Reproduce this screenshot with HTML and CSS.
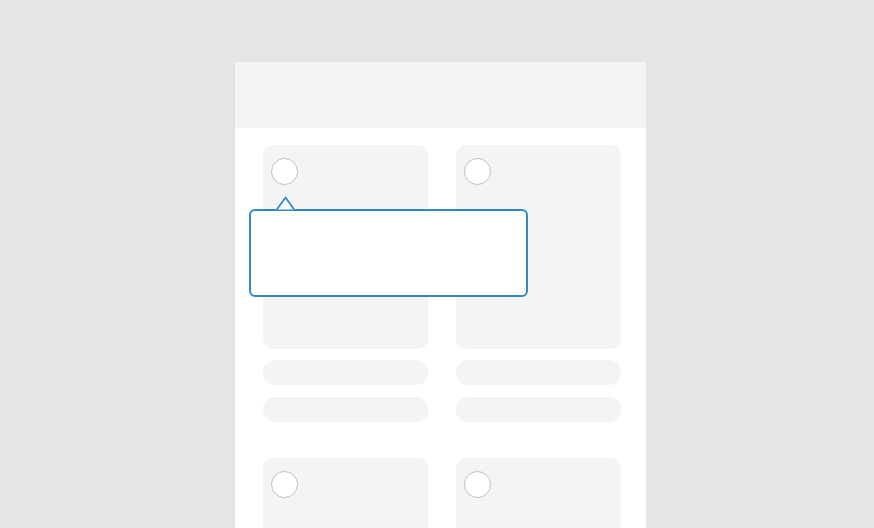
FILE: index.html
```html
<!DOCTYPE html>
<html lang="en">
<head>
<meta charset="utf-8">
<title>Skeleton</title>
<link rel="stylesheet" href="styles.css">
</head>
<body>
<div class="panel">
  <div class="header"></div>
  <div class="grid">
    <div class="item">
      <div class="card">
        <div class="avatar"></div>
        <div class="tooltip">
          <svg class="arrow" width="19" height="14" viewBox="0 0 19 14">
            <path d="M0 13.5 L9.5 1 L19 13.5 Z" fill="#ffffff"/>
            <path d="M0.8 13.6 L9.5 1.4 L18.2 13.6" fill="none" stroke="#2f87c9" stroke-width="1.7" stroke-linejoin="round"/>
          </svg>
        </div>
      </div>
      <div class="bar"></div>
      <div class="bar"></div>
    </div>
    <div class="item">
      <div class="card"><div class="avatar"></div></div>
      <div class="bar"></div>
      <div class="bar"></div>
    </div>
    <div class="item">
      <div class="card"><div class="avatar"></div></div>
      <div class="bar"></div>
      <div class="bar"></div>
    </div>
    <div class="item">
      <div class="card"><div class="avatar"></div></div>
      <div class="bar"></div>
      <div class="bar"></div>
    </div>
  </div>
</div>
</body>
</html>
```
FILE: styles.css
```css
html, body {
  margin: 0;
  padding: 0;
  height: 100%;
  overflow: hidden;
}
body {
  background: #e5e5e5;
  font-family: "Liberation Sans", Arial, sans-serif;
  padding: 62px 0 0 235px;
  box-sizing: border-box;
}
.panel {
  width: 411px;
  height: 100%;
  overflow: hidden;
  background: #ffffff;
  box-shadow: 0 0 1px rgba(0,0,0,0.06);
}
.header {
  height: 66px;
  background: #f4f4f4;
}
.grid {
  display: grid;
  grid-template-columns: 165px 165px;
  column-gap: 28px;
  row-gap: 36px;
  padding: 17px 0 0 28px;
}
.item {
  display: flex;
  flex-direction: column;
  gap: 12px;
}
.card {
  position: relative;
  height: 204px;
  background: #f4f4f4;
  border-radius: 10px;
  padding: 13px 0 0 8px;
  box-sizing: border-box;
  margin-bottom: -1px;
}
.avatar {
  width: 27px;
  height: 27px;
  box-sizing: border-box;
  border-radius: 50%;
  background: #ffffff;
  border: 1px solid #bfbfbf;
}
.bar {
  height: 25px;
  border-radius: 12px;
  background: #f4f4f4;
}
.tooltip {
  position: absolute;
  left: -14px;
  top: 64px;
  width: 279px;
  height: 88px;
  box-sizing: border-box;
  background: #ffffff;
  border: 2px solid #2f87c9;
  border-radius: 6px;
  z-index: 2;
}
.arrow {
  position: absolute;
  left: 25px;
  top: -15px;
  display: block;
}
```
